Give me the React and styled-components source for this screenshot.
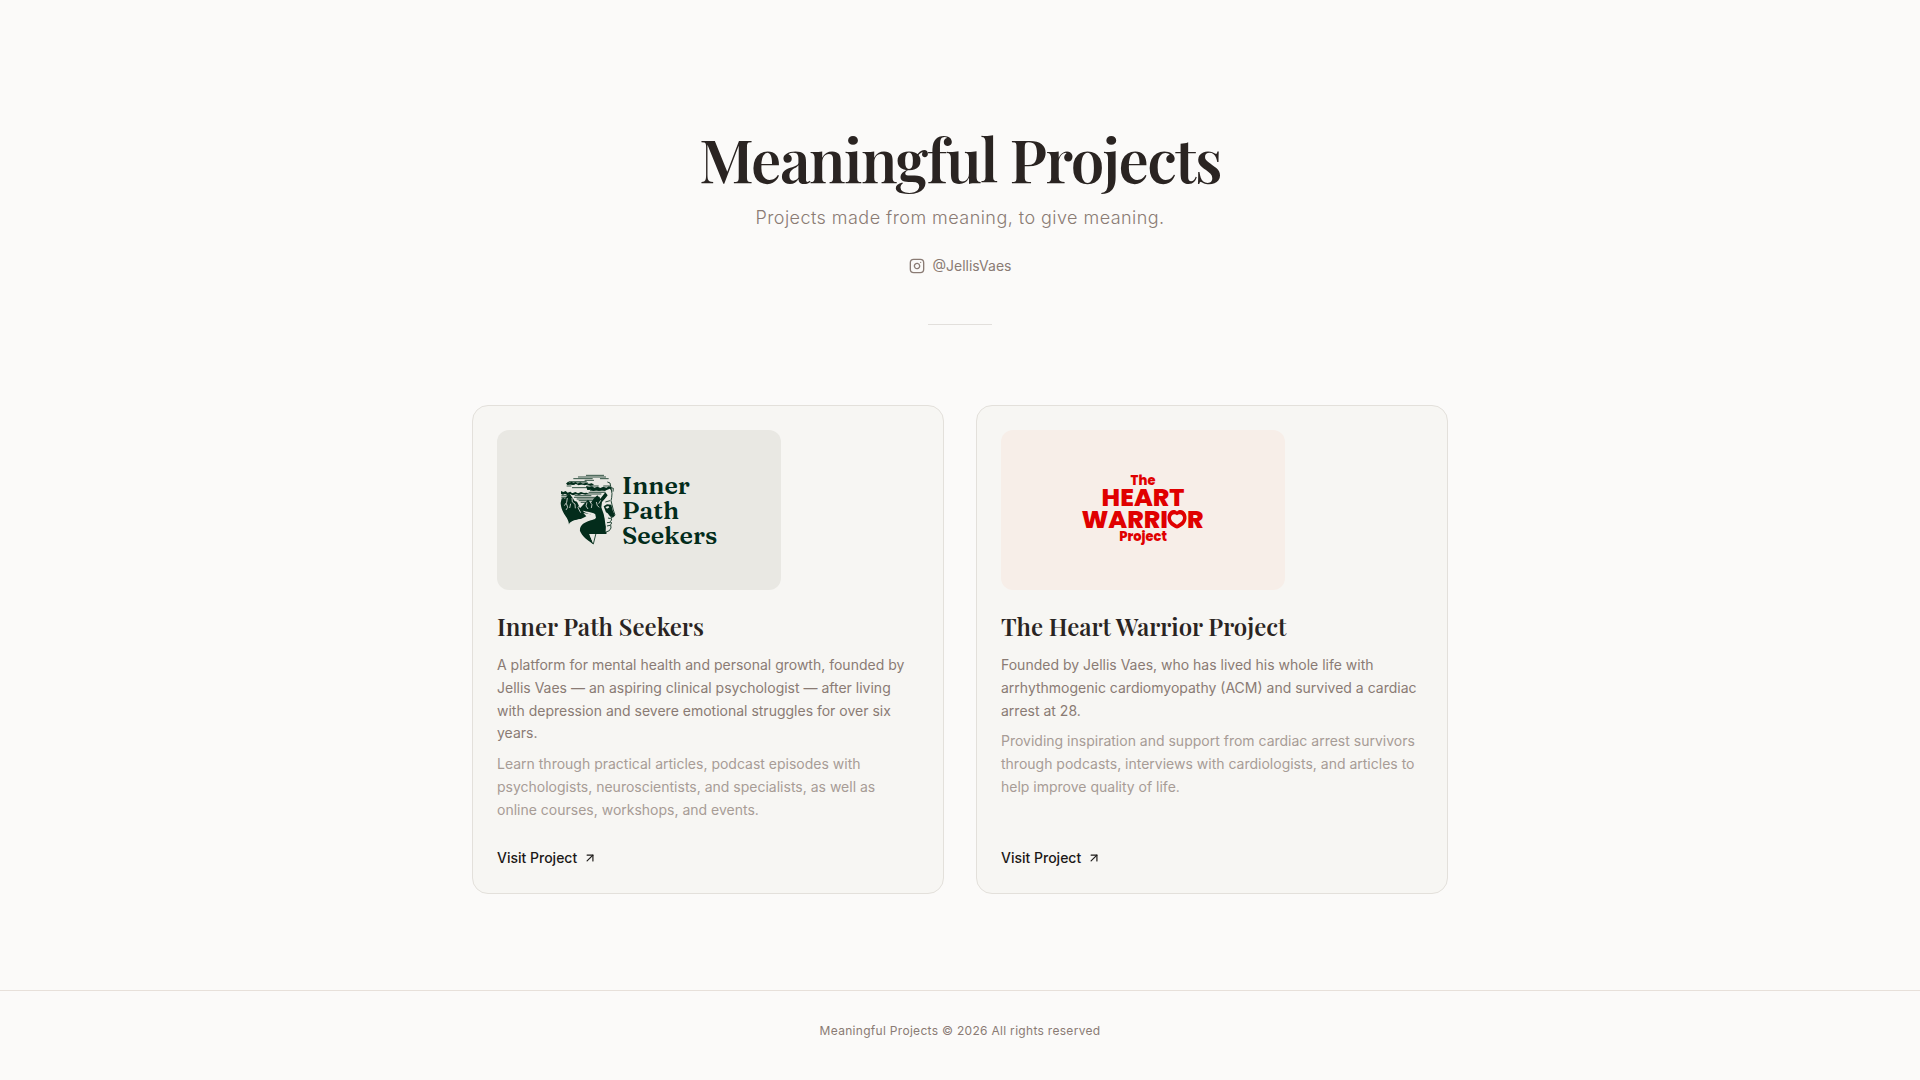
import styled, { createGlobalStyle } from 'styled-components';
import { ArrowUpRight, Instagram } from 'lucide-react';

const GlobalStyle = createGlobalStyle`
  *,
  *::before,
  *::after {
    box-sizing: border-box;
  }

  body {
    margin: 0;
    background: #fbfaf9;
    color: #2a2422;
    font-family: Inter, 'Liberation Sans', sans-serif;
    font-size: 14px;
    line-height: 20px;
  }

  h1,
  h2,
  p {
    margin: 0;
  }

  a {
    color: inherit;
    text-decoration: none;
  }
`;

const serif = `'Playfair Display', 'Liberation Serif', serif`;

const Page = styled.div`
  min-height: 100vh;
  display: flex;
  flex-direction: column;
`;

const Header = styled.header`
  display: flex;
  flex-direction: column;
  align-items: center;
  padding: 128px 24px 80px;
  text-align: center;
`;

const PageTitle = styled.h1`
  font-family: ${serif};
  font-size: 60px;
  font-weight: 600;
  line-height: 60px;
  letter-spacing: -0.025em;
`;

const Tagline = styled.p`
  margin-top: 16px;
  color: #8a7b74;
  font-size: 18px;
  font-weight: 300;
  line-height: 28px;
  letter-spacing: 0.025em;
`;

const SocialLink = styled.a`
  display: inline-flex;
  align-items: center;
  gap: 8px;
  margin-top: 24px;
  color: #8a7b74;

  &:hover {
    color: #2a2422;
  }
`;

const Divider = styled.div`
  width: 64px;
  height: 1px;
  margin-top: 48px;
  background: #e2dfdc;
`;

const Projects = styled.main`
  display: grid;
  grid-template-columns: repeat(2, minmax(0, 1fr));
  gap: 32px;
  width: 100%;
  max-width: 1024px;
  margin: 0 auto;
  padding: 0 24px 96px;

  @media (max-width: 767px) {
    grid-template-columns: 1fr;
  }
`;

const Card = styled.article`
  display: flex;
  flex-direction: column;
  align-items: flex-start;
  padding: 24px;
  background: #f7f6f3;
  border: 1px solid #e3e0db;
  border-radius: 16px;
`;

const Cover = styled.div`
  display: flex;
  align-items: center;
  justify-content: center;
  height: 160px;
  max-width: 100%;
  aspect-ratio: 16 / 9;
  margin-bottom: 20px;
  background: ${({ $tint }) => $tint};
  border-radius: 12px;
`;

const CardTitle = styled.h2`
  margin-bottom: 12px;
  font-family: ${serif};
  font-size: 24px;
  font-weight: 600;
  line-height: 32px;
`;

const Description = styled.p`
  margin-bottom: 8px;
  color: ${({ $muted }) => ($muted ? '#a79c96' : '#8a7b74')};
  line-height: 1.625;
`;

const VisitLink = styled.a`
  display: inline-flex;
  align-items: center;
  gap: 6px;
  margin-top: auto;
  padding: 19px 0 1px;
  color: #1c1917;
  font-weight: 500;

  &:hover {
    text-decoration: underline;
  }
`;

const Footer = styled.footer`
  padding: 32px 24px;
  border-top: 1px solid #e7e0da;
  color: #8a7b74;
  font-size: 12px;
  line-height: 16px;
  letter-spacing: 0.025em;
  text-align: center;
`;

const LogoSvg = styled.svg`
  display: block;
  overflow: visible;
`;

const SeekersText = styled.text`
  font-family: Fraunces, 'Liberation Serif', serif;
  font-size: 25px;
  font-weight: 600;
`;

const WarriorText = styled.text`
  font-family: Poppins, Inter, 'Liberation Sans', sans-serif;
  font-size: ${({ $small }) => ($small ? '13px' : '25px')};
  font-weight: 800;
  text-anchor: ${({ $anchor }) => $anchor || 'middle'};
`;

const InnerPathLogo = () => (
  <LogoSvg width="160" height="72" viewBox="0 0 160 72" fill="#032c1b" role="img" aria-label="Inner Path Seekers">
    <g transform="scale(0.3333) translate(-27 -27)">
      {/* sky */}
      <g fill="none" stroke="#032c1b" strokeWidth="2.4">
        <path d="M108 31h54M84 36h84M70 41h58M150 41h26M104 46h28" />
        <path d="M56 50h54M54 54h60M52 58h22M84 58h46M50 63h14M112 63h34M160 63h20" />
        <path d="M66 68h60M112 72h50M120 77h46M116 82h50M36 86h44M112 87h42" />
        <path d="M34 92h28M74 92h50M34 97h22M72 97h78M34 102h18M80 102h66M36 107h14M86 107h46M92 112h30" />
      </g>
      {/* cloud bases */}
      <path d="M48 56l6-6 5 3 6-3 5 4 7-3 6 5 8-4 8 5 9-4 9 4 8-2 7 5-11 2-9-4-8 3-9-4-9 4-8-4-9 3-8-3-8 3z" />
      <path d="M108 62l9 4 9-2 7 4 10-3 8 4 9-4 9 3 8-4 6 3 1 10-4-6-8 3-7 3-9-2-9 3-8-3-9 3-8-4-10 1z" />
      <path d="M33 78l7 3 7-3 6 5 8-3 6 5 9-4 8 4 9-4 9 3 8-1 6 4-10 2-10-2-9 3-9-2-9 3-9-4-7 4-8-5-6 3-6-2z" />
      {/* mountains */}
      <path d="M34 104l5-6 6 4 6-9 7-7 8 10 8 12 7 2 9 20 11-12 13-14 9 9 8-12 11-10 9 10 7-9 8-10 7 9-8 10-9 10-2 16 3 9 4 11 3 14 2 16 5 22-2 8H118l12 29c-17-8-34-23-40-38-2-14 10-24 24-29 12-5 23-4 24-12 0-7-12-6-20-10l-18-3 9 10-16 8-22 5-14 12c-1-11-5-18-10-25-8-13-14-23-15-40z" />
      {/* winding path */}
      <path
        d="M98 137c10 3 36 4 39 13 0 10-20 9-36 16-10 3-16 8-20 16l-25-3c4-10 17-13 30-16 14-4 34-3 40-11-6-6-20-7-28-15z"
        fill="#e9e8e3"
      />
      {/* snow ridges */}
      <g fill="none" stroke="#e9e8e3" strokeWidth="2.4">
        <path d="M52 99l-2 13-7 10M66 99l1 12 8 6 1 13M49 115l4 12-5 8M62 116l-3 13M91 118l-7 10 8 15M111 112l-3 11 6 9M119 109l7 10-2 10M139 111l3 11 6 5M152 106l-6 10" />
      </g>
      <path d="M118 208h20l-8 29z" fill="#e9e8e3" />
      <path d="M138 205l-8 32-8-6" fill="none" stroke="#032c1b" strokeWidth="2.5" />
      {/* face */}
      <path d="M165 102l18-6 4 22 4 18 5 15-9 4-3 15-2 12-2 12-8 10-5-4 1-24-5-28-5-24z" fill="#e9e8e3" />
      <path d="M161 124l10-6 13 1 4 17 6 14-4 6-9-1-8-10-5-3z" />
      <path d="M166 126l9-3 3 4-7 4z" fill="#e9e8e3" />
      <g fill="none" stroke="#032c1b" strokeWidth="2.6">
        <path d="M172 51l8 3 3 14 7 2-1 10M183 68l3 18-1 12-2 9 3 12 4 16 5 15-4 5-8 3 2 7-4 4 4 5-3 5 1 10-5 8-12 5" />
        <path d="M166 111l14-4M174 159l8 2M171 173l11-1M171 183l9-2" />
      </g>
    </g>
    <SeekersText x="63" y="20">Inner</SeekersText>
    <SeekersText x="63" y="45">Path</SeekersText>
    <SeekersText x="63" y="70">Seekers</SeekersText>
  </LogoSvg>
);

const HeartWarriorLogo = () => (
  <LogoSvg width="124" height="72" viewBox="0 0 124 72" fill="#e00000" role="img" aria-label="The Heart Warrior Project">
    <WarriorText x="62" y="11" $small>The</WarriorText>
    <WarriorText x="62" y="32">HEART</WarriorText>
    <WarriorText x="87" y="54" $anchor="end">WARRI</WarriorText>
    {/* heart standing in for the O */}
    <path
      fillRule="evenodd"
      d="M96 37.500c2-1.800 4.500-1.800 6.500-.5 2.300 1.700 3.200 4.500 3 7.500-.4 5-4.500 8.700-9.500 10-5-1.300-9.100-5-9.500-10-.2-3 .7-5.800 3-7.500 2-1.300 4.500-1.300 6.500.5zM96 41.200c-2.500-2.200-6-.7-6 2.600 0 3.200 3 5.200 6 7 3-1.800 6-3.800 6-7 0-3.300-3.500-4.800-6-2.600z"
    />
    <WarriorText x="106" y="54" $anchor="start">R</WarriorText>
    <WarriorText x="62" y="67" $small>Project</WarriorText>
  </LogoSvg>
);

const projects = [
  {
    title: 'Inner Path Seekers',
    tint: '#e9e8e3',
    Logo: InnerPathLogo,
    about:
      'A platform for mental health and personal growth, founded by Jellis Vaes — an aspiring clinical psychologist — after living with depression and severe emotional struggles for over six years.',
    details:
      'Learn through practical articles, podcast episodes with psychologists, neuroscientists, and specialists, as well as online courses, workshops, and events.',
  },
  {
    title: 'The Heart Warrior Project',
    tint: '#f7eee8',
    Logo: HeartWarriorLogo,
    about:
      'Founded by Jellis Vaes, who has lived his whole life with arrhythmogenic cardiomyopathy (ACM) and survived a cardiac arrest at 28.',
    details:
      'Providing inspiration and support from cardiac arrest survivors through podcasts, interviews with cardiologists, and articles to help improve quality of life.',
  },
];

const App = () => {
  return (
    <>
      <GlobalStyle />
      <Page>
        <Header>
          <PageTitle>Meaningful Projects</PageTitle>
          <Tagline>Projects made from meaning, to give meaning.</Tagline>
          <SocialLink href="#instagram">
            <Instagram size={16} />
            @JellisVaes
          </SocialLink>
          <Divider />
        </Header>
        <Projects>
          {projects.map(({ title, tint, Logo, about, details }) => (
            <Card key={title}>
              <Cover $tint={tint}>
                <Logo />
              </Cover>
              <CardTitle>{title}</CardTitle>
              <Description>{about}</Description>
              <Description $muted>{details}</Description>
              <VisitLink href="#visit">
                Visit Project
                <ArrowUpRight size={14} />
              </VisitLink>
            </Card>
          ))}
        </Projects>
        <Footer>Meaningful Projects © 2026 All rights reserved</Footer>
      </Page>
    </>
  );
};

export default App;
